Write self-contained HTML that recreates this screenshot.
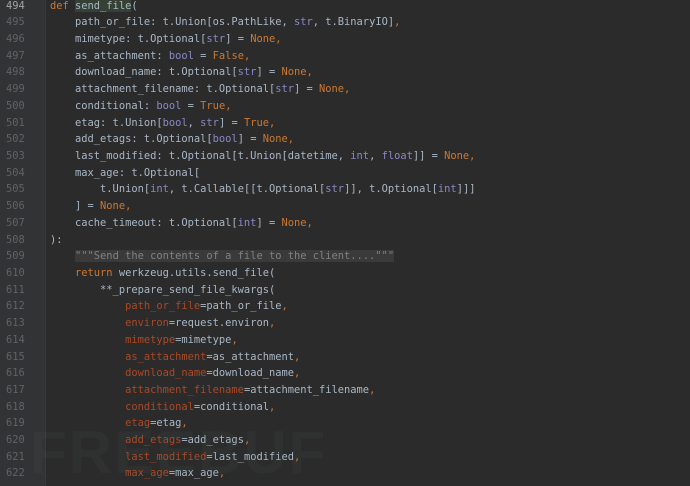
<!DOCTYPE html><html><head><style>
html,body{margin:0;width:690px;height:486px;overflow:hidden;background:#2b2b2b;}
body{font-family:"DejaVu Sans Mono","Liberation Mono",monospace;font-size:10.4px;position:relative}
.g{position:absolute;left:0;top:0;width:45px;height:486px;background:#313335;border-right:1px solid #3a3a3a}
.l{position:absolute;left:0;height:16.7px;line-height:16.7px;white-space:pre;color:#a9b7c6}
.n{position:absolute;left:6px;color:#606366;height:16.7px;line-height:16.7px}
.k{color:#cc7832}.b{color:#8888c6}.a{color:#aa4926}.d{color:#7f8184;background:#3a3a3a}
.wm{position:absolute;left:30px;top:418px;font:bold 60px "Liberation Sans",sans-serif;color:rgba(90,110,95,0.10);letter-spacing:2px}
</style></head><body>
<div class="g"></div>
<div id="c"></div>
<div class="wm">FREEBUF</div>
<script>
var L=[
['494','<span class="k">def </span><span style="background:#344134;color:#a9b7c6">send_file</span>('],
['495','    path_or_file: t.Union[os.PathLike, <span class="b">str</span>, t.BinaryIO]<span class="k">,</span>'],
['496','    mimetype: t.Optional[<span class="b">str</span>] = <span class="k">None,</span>'],
['497','    as_attachment: <span class="b">bool</span> = <span class="k">False,</span>'],
['498','    download_name: t.Optional[<span class="b">str</span>] = <span class="k">None,</span>'],
['499','    attachment_filename: t.Optional[<span class="b">str</span>] = <span class="k">None,</span>'],
['500','    conditional: <span class="b">bool</span> = <span class="k">True,</span>'],
['501','    etag: t.Union[<span class="b">bool</span>, <span class="b">str</span>] = <span class="k">True,</span>'],
['502','    add_etags: t.Optional[<span class="b">bool</span>] = <span class="k">None,</span>'],
['503','    last_modified: t.Optional[t.Union[datetime, <span class="b">int</span>, <span class="b">float</span>]] = <span class="k">None,</span>'],
['504','    max_age: t.Optional['],
['505','        t.Union[<span class="b">int</span>, t.Callable[[t.Optional[<span class="b">str</span>]], t.Optional[<span class="b">int</span>]]]'],
['506','    ] = <span class="k">None,</span>'],
['507','    cache_timeout: t.Optional[<span class="b">int</span>] = <span class="k">None,</span>'],
['508','):'],
['509','    <span class="d">"""Send the contents of a file to the client...."""</span>'],
['610','    <span class="k">return </span>werkzeug.utils.send_file('],
['611','        **_prepare_send_file_kwargs('],
['612','            <span class="a">path_or_file</span>=path_or_file<span class="k">,</span>'],
['613','            <span class="a">environ</span>=request.environ<span class="k">,</span>'],
['614','            <span class="a">mimetype</span>=mimetype<span class="k">,</span>'],
['615','            <span class="a">as_attachment</span>=as_attachment<span class="k">,</span>'],
['616','            <span class="a">download_name</span>=download_name<span class="k">,</span>'],
['617','            <span class="a">attachment_filename</span>=attachment_filename<span class="k">,</span>'],
['618','            <span class="a">conditional</span>=conditional<span class="k">,</span>'],
['619','            <span class="a">etag</span>=etag<span class="k">,</span>'],
['620','            <span class="a">add_etags</span>=add_etags<span class="k">,</span>'],
['621','            <span class="a">last_modified</span>=last_modified<span class="k">,</span>'],
['622','            <span class="a">max_age</span>=max_age<span class="k">,</span>']];
var h='';
L.forEach(function(x,i){var t=(-2.4+i*16.71).toFixed(2);
h+='<div class="n" style="top:'+t+'px;'+(i==0?'color:#a4a3a3':'')+'">'+x[0]+'</div><div class="l" style="left:50px;top:'+t+'px">'+x[1]+'</div>';});
document.getElementById('c').innerHTML=h;
</script>
</body></html>
